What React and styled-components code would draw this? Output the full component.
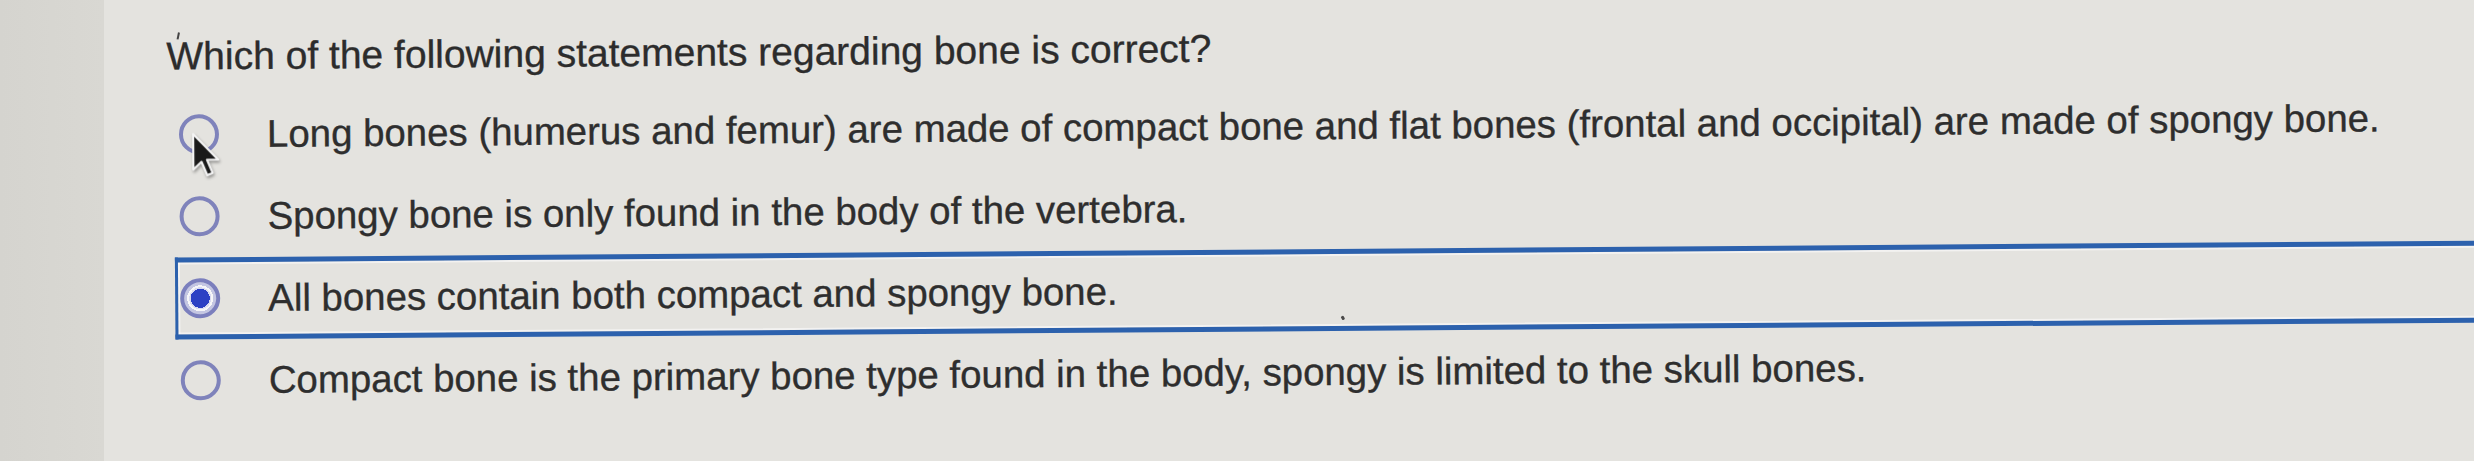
import React from "react";
import styled, { createGlobalStyle, css } from "styled-components";

const GlobalStyle = createGlobalStyle`
  html, body {
    margin: 0;
    padding: 0;
    background: #e3e2de;
  }
  body {
    font-family: "Liberation Sans", Arial, Helvetica, sans-serif;
  }
`;

const Page = styled.div`
  display: flex;
  width: 2474px;
  height: 461px;
  overflow: hidden;
  background: #e4e3df;
`;

const Bezel = styled.div`
  flex: 0 0 104px;
  background: linear-gradient(to right, #d5d4cf, #d9d8d3);
`;

const Panel = styled.div`
  flex: 1;
  min-width: 0;
  padding: 37px 0 0 62px;
  transform: rotate(-0.42deg);
  transform-origin: 0 0;
`;

const Question = styled.p`
  position: relative;
  margin: 0;
  font-size: 39px;
  line-height: 39px;
  color: #2c2c2c;
  -webkit-text-stroke: 0.35px #2c2c2c;
  white-space: nowrap;

  &::before {
    content: "";
    position: absolute;
    left: 11px;
    top: -4px;
    width: 2px;
    height: 7px;
    background: #444;
    transform: rotate(12deg);
  }
`;

const OptionList = styled.div`
  display: flex;
  flex-direction: column;
  margin: 18px -80px 0 7px;
`;

const OptionRow = styled.label`
  position: relative;
  display: flex;
  align-items: center;
  height: 82px;
  box-sizing: border-box;
  padding-left: 2px;
  border-left: 3px solid transparent;
  border-top: 5px solid transparent;
  border-bottom: 5px solid transparent;

  ${({ $selected }) =>
    $selected &&
    css`
      border-color: #2c61ad;
      box-shadow: inset 0 2px 0 rgba(255, 255, 255, 0.55),
        inset 0 -2px 0 rgba(255, 255, 255, 0.55),
        inset 2px 0 0 rgba(255, 255, 255, 0.55);
    `}
`;

const Radio = styled.span`
  flex: 0 0 40px;
  width: 40px;
  height: 40px;
  box-sizing: border-box;
  border-radius: 50%;
  border: 4px solid #7f83bb;

  ${({ $checked }) =>
    $checked &&
    css`
      border-color: #7b7fbd;
      background: radial-gradient(
        circle,
        #2c40c4 0 9.5px,
        #d9daf0 9.5px 11px,
        #f6f6f8 11px 13px,
        #c4c6e2 13px 16px
      );
    `}
`;

const Label = styled.span`
  margin-left: 48px;
  font-size: 38.4px;
  line-height: 38px;
  color: #2e2e2e;
  -webkit-text-stroke: 0.35px #2e2e2e;
  white-space: nowrap;
`;

const Speck = styled.span`
  position: absolute;
  left: ${({ $x }) => $x}px;
  top: ${({ $y }) => $y}px;
  width: 3px;
  height: 4px;
  border-radius: 1px;
  background: #4a4a4a;
  transform: rotate(-30deg);
`;

const Cursor = styled.svg`
  position: absolute;
  left: 14px;
  top: 34px;
  width: 31px;
  height: 48px;
  filter: drop-shadow(1px 2px 1.5px rgba(0, 0, 0, 0.35));
  pointer-events: none;
`;

const options = [
  "Long bones (humerus and femur) are made of compact bone and flat bones (frontal and occipital) are made of spongy bone.",
  "Spongy bone is only found in the body of the vertebra.",
  "All bones contain both compact and spongy bone.",
  "Compact bone is the primary bone type found in the body, spongy is limited to the skull bones.",
];

export default function App() {
  const selected = 2;
  return (
    <>
      <GlobalStyle />
      <Page>
        <Bezel />
        <Panel>
          <Question>Which of the following statements regarding bone is correct?</Question>
          <OptionList>
            {options.map((text, i) => (
              <OptionRow key={i} $selected={i === selected}>
                <Radio $checked={i === selected} />
                <Label>{text}</Label>
                {i === 0 && (
                  <Cursor viewBox="0 0 17 27">
                    <path
                      d="M1 1 L1 21 L5.6 16.6 L8.8 24.2 L11.8 22.9 L8.7 15.5 L15 15.5 Z"
                      fill="#1a1a1a"
                      stroke="#f4f4f4"
                      strokeWidth="1.2"
                      strokeLinejoin="round"
                    />
                  </Cursor>
                )}
                {i === selected && <Speck $x={1163} $y={62} />}
              </OptionRow>
            ))}
          </OptionList>
        </Panel>
      </Page>
    </>
  );
}
